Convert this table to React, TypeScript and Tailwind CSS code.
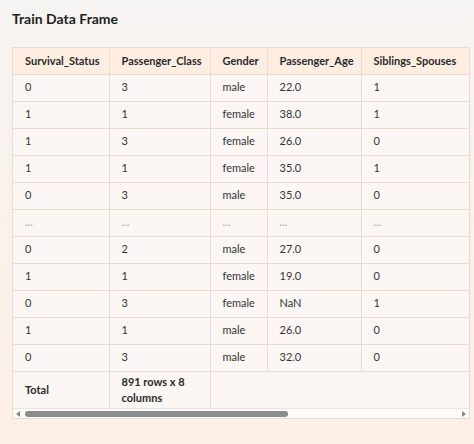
import React from "react"

// only the columns visible in the scrolled viewport
const HEADERS = ["Survival_Status", "Passenger_Class", "Gender", "Passenger_Age", "Siblings_Spouses"]

const WIDTHS = [96, 101, 57, 94, 108]

const ROWS: string[][] = [
  ["0", "3", "male", "22.0", "1"],
  ["1", "1", "female", "38.0", "1"],
  ["1", "3", "female", "26.0", "0"],
  ["1", "1", "female", "35.0", "1"],
  ["0", "3", "male", "35.0", "0"],
  ["...", "...", "...", "...", "..."],
  ["0", "2", "male", "27.0", "0"],
  ["1", "1", "female", "19.0", "0"],
  ["0", "3", "female", "NaN", "1"],
  ["1", "1", "male", "26.0", "0"],
  ["0", "3", "male", "32.0", "0"],
]

export default function App() {
  return (
    <div
      className="w-[474px] h-[444px] bg-gradient-to-b from-[#f6f4f2] to-[#fcefe6] px-3 pt-[9px] text-[#2b2b2b]"
      style={{ fontFamily: "Lato, 'Open Sans', sans-serif" }}
    >
      <h2 className="text-[14px] leading-5 font-bold text-[#222]">Train Data Frame</h2>

      <div className="mt-[18px] w-[458px] border border-[#eadbd2] bg-[#fcf7f4]">
        <table className="w-[456px] table-fixed border-collapse text-[11px]">
          <colgroup>
            {WIDTHS.map((w, i) => (
              <col key={i} style={{ width: w }} />
            ))}
          </colgroup>
          <thead>
            <tr className="h-[26px] bg-[#fdeee1]">
              {HEADERS.map((h) => (
                <th
                  key={h}
                  className="border-r border-b border-[#eadbd2] px-3 text-left font-bold text-[#2a2a2a] whitespace-nowrap"
                >
                  {h}
                </th>
              ))}
            </tr>
          </thead>
          <tbody>
            {ROWS.map((r, i) => (
              <tr key={i} className="h-[27px]">
                {r.map((c, j) => (
                  <td
                    key={j}
                    className={`border-r border-b border-[#eadbd2] px-3 whitespace-nowrap ${
                      c === "..." ? "text-[#9a9a9a]" : "text-[#333]"
                    }`}
                  >
                    {c}
                  </td>
                ))}
              </tr>
            ))}
            <tr className="h-[37px]">
              <td className="border-r border-[#eadbd2] px-3 font-bold text-[#2a2a2a]">Total</td>
              <td className="border-r border-[#eadbd2] px-3 font-bold leading-[16px] text-[#2a2a2a]">
                891 rows x 8 columns
              </td>
              <td colSpan={3}></td>
            </tr>
          </tbody>
        </table>

        {/* horizontal scrollbar */}
        <div className="flex h-[10px] items-center bg-[#fdfbfa] border-t border-[#f0e6e0]">
          <span className="ml-[3px] h-0 w-0 border-y-[3px] border-r-[4px] border-y-transparent border-r-[#8a8a8a]" />
          <div className="ml-[5px] h-[6px] w-[263px] rounded-full bg-[#8c8c8c]" />
          <div className="flex-1" />
          <span className="mr-[3px] h-0 w-0 border-y-[3px] border-l-[4px] border-y-transparent border-l-[#8a8a8a]" />
        </div>
      </div>
    </div>
  )
}
